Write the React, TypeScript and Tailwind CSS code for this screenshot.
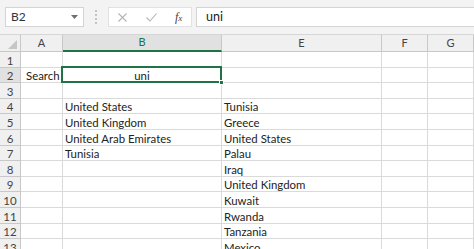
import React from "react"

const rows: { a?: string; b?: string; e?: string }[] = [
  {},
  { a: "Search", b: "uni" },
  {},
  { b: "United States", e: "Tunisia" },
  { b: "United Kingdom", e: "Greece" },
  { b: "United Arab Emirates", e: "United States" },
  { b: "Tunisia", e: "Palau" },
  { e: "Iraq" },
  { e: "United Kingdom" },
  { e: "Kuwait" },
  { e: "Rwanda" },
  { e: "Tanzania" },
  { e: "Mexico" },
]

const cols = "grid grid-cols-[21px_42px_159px_160px_46px_46px]"

function Toolbar() {
  return (
    <div className="h-[35px] bg-[#f3f3f3] flex items-center border-b border-[#d6d6d6]">
      <div className="ml-[5px] w-[79px] h-[20px] bg-white border border-[#d4d4d4] flex items-center justify-between pl-[5px] pr-[5px]">
        <span className="text-[12px] text-[#333]">B2</span>
        <svg width="7" height="4" viewBox="0 0 7 4">
          <path d="M0 0 L7 0 L3.5 4 Z" fill="#707070" />
        </svg>
      </div>
      <div className="ml-[10px] w-[4px] flex flex-col items-center gap-[2px]">
        <span className="w-[2px] h-[2px] bg-[#c4c4c4]" />
        <span className="w-[2px] h-[2px] bg-[#c4c4c4]" />
        <span className="w-[2px] h-[2px] bg-[#c4c4c4]" />
        <span className="w-[2px] h-[2px] bg-[#c4c4c4]" />
      </div>
      <div className="ml-[10px] w-[84px] h-[20px] bg-white border border-[#e2e2e2] flex items-center">
        <svg className="ml-[9px]" width="9" height="9" viewBox="0 0 9 9">
          <path d="M0.5 0.5 L8.5 8.5 M8.5 0.5 L0.5 8.5" stroke="#b5b5b5" strokeWidth="1.1" />
        </svg>
        <svg className="ml-[19px]" width="11" height="9" viewBox="0 0 11 9">
          <path d="M0.5 4.5 L4 8 L10.5 0.5" stroke="#b5b5b5" strokeWidth="1.1" fill="none" />
        </svg>
        <span className="ml-[18px] text-[12px] italic text-[#444] font-['Liberation_Serif',serif] leading-none">
          f<span className="text-[9px]">x</span>
        </span>
      </div>
      <div className="ml-[4px] flex-1 h-[20px] bg-white border border-[#d4d4d4] border-r-0 flex items-center pl-[9px]">
        <span className="text-[12.5px] text-[#222]">uni</span>
      </div>
    </div>
  )
}

function HeaderRow() {
  const hdr = "h-[17px] flex items-center justify-center border-r border-b border-[#c8c8c8] bg-[#f0f0f0] text-[11px] text-[#444]"
  return (
    <div className={cols}>
      <div className={hdr + " relative"}>
        <svg className="absolute right-[3px] bottom-[2px]" width="9" height="9" viewBox="0 0 9 9">
          <path d="M9 0 L9 9 L0 9 Z" fill="#c6c6c6" />
        </svg>
      </div>
      <div className={hdr}>A</div>
      <div className="h-[17px] flex items-center justify-center border-r border-[#c8c8c8] border-b-2 border-b-[#217346] bg-[#e1e1e1] text-[11px] text-[#217346]">
        B
      </div>
      <div className={hdr}>E</div>
      <div className={hdr}>F</div>
      <div className={hdr}>G</div>
    </div>
  )
}

export default function App() {
  return (
    <div className="w-[474px] h-[249px] overflow-hidden bg-white font-['Lato',sans-serif]">
      <Toolbar />
      <HeaderRow />
      {rows.map((r, i) => {
        const sel = i === 1
        const cell = "h-[15.6px] border-r border-b border-[#dadada] flex items-end text-[11.4px] leading-[12px] text-[#222] whitespace-nowrap overflow-visible"
        return (
          <div key={i} className={cols}>
            <div
              className={
                "h-[15.6px] border-r border-b border-[#c8c8c8] flex items-end justify-center text-[11.5px] leading-[12px] text-[#444] " +
                (sel ? "bg-[#e1e1e1]" : "bg-[#f0f0f0]")
              }
            >
              {i + 1}
            </div>
            <div className={cell + " pl-[5px]"}>{r.a}</div>
            <div className={cell + (sel ? " justify-center relative" : " pl-[2px]")}>
              {r.b}
              {sel && (
                <>
                  <span className="absolute left-[-2px] top-[-2px] right-[-1px] bottom-[-1px] border-2 border-[#217346]" />
                  <span className="absolute right-[-3px] bottom-[-3px] w-[5px] h-[5px] bg-[#217346] border border-white" />
                </>
              )}
            </div>
            <div className={cell + " pl-[2px]"}>{r.e}</div>
            <div className={cell} />
            <div className={cell} />
          </div>
        )
      })}
    </div>
  )
}
